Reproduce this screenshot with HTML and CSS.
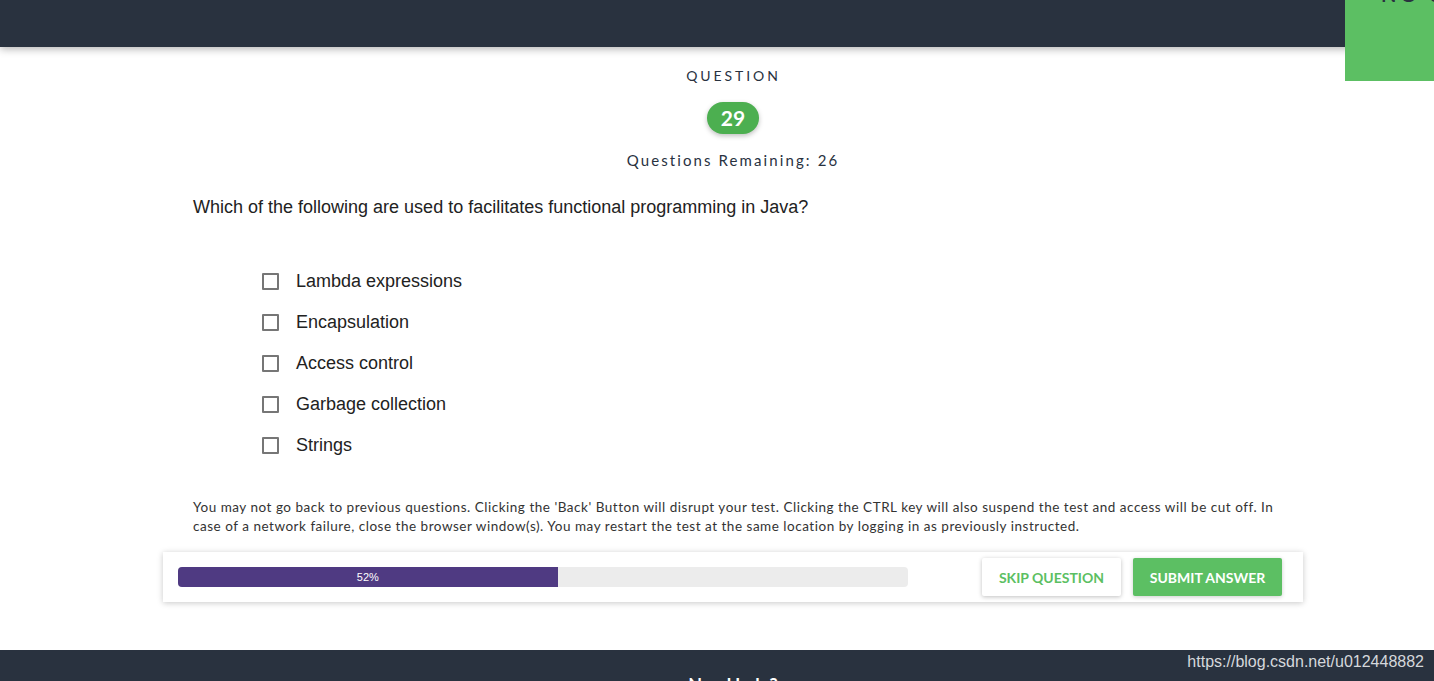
FILE: index.html
```html
<!DOCTYPE html>
<html>
<head>
<meta charset="utf-8">
<link rel="stylesheet" href="styles.css">
</head>
<body>
<header class="topbar"></header>
<div class="corner"><span class="corner-text">NO 0</span></div>
<main class="wrap">
  <div class="q-head">
    <div class="q-label">QUESTION</div>
    <div class="q-num">29</div>
    <div class="q-remaining">Questions Remaining: 26</div>
  </div>
  <p class="q-text">Which of the following are used to facilitates functional programming in Java?</p>
  <ul class="options">
    <li class="opt"><span class="box"></span><span>Lambda expressions</span></li>
    <li class="opt"><span class="box"></span><span>Encapsulation</span></li>
    <li class="opt"><span class="box"></span><span>Access control</span></li>
    <li class="opt"><span class="box"></span><span>Garbage collection</span></li>
    <li class="opt"><span class="box"></span><span>Strings</span></li>
  </ul>
  <p class="notice">You may not go back to previous questions. Clicking the 'Back' Button will disrupt your test. Clicking the CTRL key will also suspend the test and access will be cut off. In case of a network failure, close the browser window(s). You may restart the test at the same location by logging in as previously instructed.</p>
  <div class="card">
    <div class="progress"><div class="fill" style="width:52%">52%</div></div>
    <div class="actions">
      <button class="btn skip">SKIP QUESTION</button>
      <button class="btn submit">SUBMIT ANSWER</button>
    </div>
  </div>
</main>
<footer class="foot">
  <div class="help">Need help?</div>
  <div class="watermark">https://blog.csdn.net/u012448882</div>
</footer>
</body>
</html>
```
FILE: styles.css
```css
* { box-sizing: border-box; }
html, body { margin: 0; padding: 0; }
body {
  background: #fff;
  font-family: "Lato", "Liberation Sans", sans-serif;
  color: #29323f;
  height: 681px;
  overflow: hidden;
  position: relative;
}
.topbar {
  height: 47px;
  background: #29323f;
  box-shadow: 0 2px 8px rgba(0,0,0,0.3);
  position: relative;
  z-index: 1;
}
.corner {
  position: absolute;
  top: 0;
  right: 0;
  width: 89px;
  height: 81px;
  background: #5cbf63;
  z-index: 2;
  overflow: hidden;
}
.corner-text {
  position: absolute;
  top: -18px;
  left: 36px;
  font-size: 20px;
  font-weight: 700;
  color: #29323f;
  letter-spacing: 4px;
  white-space: nowrap;
}
.wrap {
  width: 1140px;
  margin-left: 163px;
  height: 603px;
}
.q-head {
  display: flex;
  flex-direction: column;
  align-items: center;
  padding-top: 19px;
}
.q-label {
  font-size: 14px;
  line-height: 20px;
  letter-spacing: 2.9px;
  padding-left: 1px;
  color: #29323f;
}
.q-num {
  margin-top: 16px;
  width: 52px;
  height: 32px;
  border-radius: 16px;
  background: #4caf50;
  color: #fff;
  font-weight: 700;
  font-size: 21px;
  line-height: 32px;
  text-align: center;
  box-shadow: 0 2px 5px rgba(0,0,0,0.25);
}
.q-remaining {
  margin-top: 16px;
  font-size: 15px;
  line-height: 20px;
  letter-spacing: 2.1px;
  color: #29323f;
}
.q-text {
  margin: 26px 0 0 30px;
  font-family: "Liberation Sans", Arial, sans-serif;
  font-size: 18px;
  line-height: 22px;
  color: #222;
}
.options {
  list-style: none;
  margin: 52px 0 0 99px;
  padding: 0;
  display: flex;
  flex-direction: column;
  gap: 19px;
}
.opt {
  display: flex;
  align-items: center;
  gap: 17px;
  height: 22px;
  font-family: "Liberation Sans", Arial, sans-serif;
  font-size: 18px;
  color: #222;
}
.box {
  width: 17px;
  height: 17px;
  border: 2px solid #767676;
  border-radius: 1px;
  background: #fff;
}
.notice {
  margin: 42px 0 0 30px;
  width: 1092px;
  font-size: 13.5px;
  letter-spacing: 0.52px;
  line-height: 19px;
  color: #333;
}
.card {
  margin-top: 16px;
  height: 50px;
  background: #fff;
  box-shadow: 0 1px 6px rgba(0,0,0,0.22);
  display: flex;
  align-items: center;
  padding: 0 21px 0 15px;
}
.progress {
  width: 730px;
  height: 20px;
  background: #ececec;
  border-radius: 4px;
  overflow: hidden;
}
.fill {
  height: 20px;
  background: #4f3a82;
  color: #fff;
  font-family: "Liberation Sans", Arial, sans-serif;
  font-size: 11px;
  line-height: 20px;
  text-align: center;
}
.actions {
  margin-left: auto;
  display: flex;
  gap: 12px;
}
.btn {
  height: 38px;
  border: 0;
  border-radius: 2px;
  font-family: "Lato", "Liberation Sans", sans-serif;
  font-weight: 700;
  font-size: 14px;
  padding: 0 12px;
  cursor: pointer;
}
.skip {
  width: 139px;
  background: #fff;
  color: #5cbf63;
  box-shadow: 0 1px 4px rgba(0,0,0,0.25);
}
.submit {
  width: 149px;
  background: #5cbf63;
  color: #fff;
  box-shadow: 0 1px 4px rgba(0,0,0,0.2);
}
.foot {
  position: absolute;
  left: 0;
  right: 0;
  top: 650px;
  height: 60px;
  background: #29323f;
  display: flex;
  justify-content: center;
}
.help {
  margin-top: 24px;
  margin-left: 32px;
  color: #fff;
  font-weight: 700;
  font-size: 18px;
}
.watermark {
  position: absolute;
  right: 10px;
  top: 3px;
  font-family: "Liberation Sans", Arial, sans-serif;
  font-size: 16px;
  color: #d5d8dc;
}
```
